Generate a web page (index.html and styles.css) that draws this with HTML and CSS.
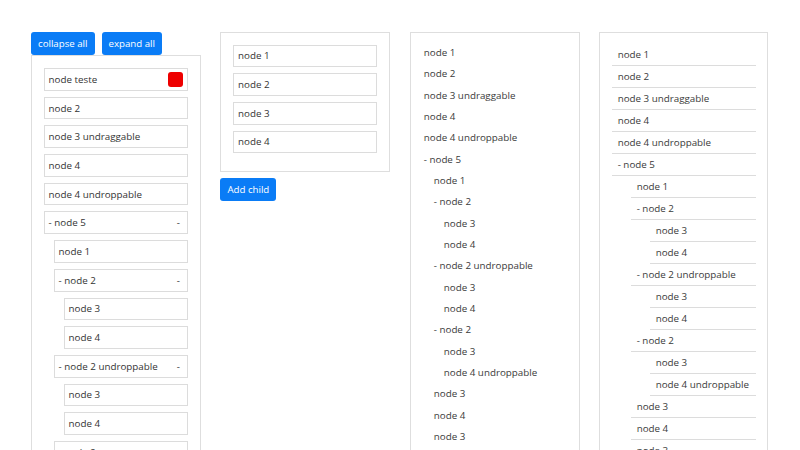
FILE: index.html
```html
<!DOCTYPE html>
<html>
<head>
<meta charset="utf-8">
<link rel="stylesheet" href="styles.css">
</head>
<body>
<div class="page">
  <div class="col">
    <div class="btns">
      <button class="btn">collapse all</button>
      <button class="btn">expand all</button>
    </div>
    <div class="box">
      <div class="item"><span>node teste</span><span class="red"></span></div>
      <div class="item"><span>node 2</span></div>
      <div class="item"><span>node 3 undraggable</span></div>
      <div class="item"><span>node 4</span></div>
      <div class="item"><span>node 4 undroppable</span></div>
      <div class="item"><span>- node 5</span><span class="tog">-</span></div>
      <div class="kids">
        <div class="item"><span>node 1</span></div>
        <div class="item"><span>- node 2</span><span class="tog">-</span></div>
        <div class="kids">
          <div class="item"><span>node 3</span></div>
          <div class="item"><span>node 4</span></div>
        </div>
        <div class="item"><span>- node 2 undroppable</span><span class="tog">-</span></div>
        <div class="kids">
          <div class="item"><span>node 3</span></div>
          <div class="item"><span>node 4</span></div>
        </div>
        <div class="item"><span>- node 2</span><span class="tog">-</span></div>
        <div class="kids">
          <div class="item"><span>node 3</span></div>
          <div class="item"><span>node 4 undroppable</span></div>
        </div>
      </div>
    </div>
  </div>

  <div class="col">
    <div class="box">
      <div class="item"><span>node 1</span></div>
      <div class="item"><span>node 2</span></div>
      <div class="item"><span>node 3</span></div>
      <div class="item"><span>node 4</span></div>
    </div>
    <button class="btn add">Add child</button>
  </div>

  <div class="col">
    <div class="box plain">
      <div class="prow">node 1</div>
      <div class="prow">node 2</div>
      <div class="prow">node 3 undraggable</div>
      <div class="prow">node 4</div>
      <div class="prow">node 4 undroppable</div>
      <div class="prow">- node 5</div>
      <div class="pkids">
        <div class="prow">node 1</div>
        <div class="prow">- node 2</div>
        <div class="pkids">
          <div class="prow">node 3</div>
          <div class="prow">node 4</div>
        </div>
        <div class="prow">- node 2 undroppable</div>
        <div class="pkids">
          <div class="prow">node 3</div>
          <div class="prow">node 4</div>
        </div>
        <div class="prow">- node 2</div>
        <div class="pkids">
          <div class="prow">node 3</div>
          <div class="prow">node 4 undroppable</div>
        </div>
        <div class="prow">node 3</div>
        <div class="prow">node 4</div>
        <div class="prow">node 3</div>
        <div class="prow">node 4</div>
      </div>
    </div>
  </div>

  <div class="col">
    <div class="box lined">
      <div class="lrow">node 1</div>
      <div class="lrow">node 2</div>
      <div class="lrow">node 3 undraggable</div>
      <div class="lrow">node 4</div>
      <div class="lrow">node 4 undroppable</div>
      <div class="lrow">- node 5</div>
      <div class="lkids">
        <div class="lrow">node 1</div>
        <div class="lrow">- node 2</div>
        <div class="lkids">
          <div class="lrow">node 3</div>
          <div class="lrow">node 4</div>
        </div>
        <div class="lrow">- node 2 undroppable</div>
        <div class="lkids">
          <div class="lrow">node 3</div>
          <div class="lrow">node 4</div>
        </div>
        <div class="lrow">- node 2</div>
        <div class="lkids">
          <div class="lrow">node 3</div>
          <div class="lrow">node 4 undroppable</div>
        </div>
        <div class="lrow">node 3</div>
        <div class="lrow">node 4</div>
        <div class="lrow">node 3</div>
        <div class="lrow">node 4</div>
      </div>
    </div>
  </div>
</div>
</body>
</html>
```

FILE: styles.css
```css
* { box-sizing: border-box; }
html, body { margin: 0; padding: 0; background: #fff; }
body {
  font-family: "Open Sans", "Noto Sans", sans-serif;
  font-size: 9.8px;
  color: #333;
  overflow: hidden;
  height: 450px;
}
.page {
  display: grid;
  grid-template-columns: 170px 170px 170px 169px;
  column-gap: 19.4px;
  padding: 31.5px 0 0 31px;
  align-items: start;
}
.btns { display: flex; gap: 7px; }
.btn {
  font-family: inherit;
  font-size: 9.7px;
  color: #fff;
  background: #0a7cf6;
  border: none;
  border-radius: 3px;
  height: 23.5px;
  padding: 0 7px;
  line-height: 23.5px;
}
.box {
  border: 1px solid #dedede;
  padding: 12px;
}
.item {
  height: 22.7px;
  border: 1px solid #dcdcdc;
  margin-bottom: 6px;
  display: flex;
  align-items: center;
  justify-content: space-between;
  padding: 0 7px 0 3.6px;
  white-space: nowrap;
}
.item .red {
  width: 15px;
  height: 15px;
  background: #ee0000;
  border-radius: 3px;
  margin-right: -3px;
}
.kids { margin-left: 10px; }
.add { margin-top: 5.5px; padding: 0 7px; }

.plain { padding: 9.5px 12px 10px 13px; height: 480px; }
.prow {
  height: 21.33px;
  line-height: 21.33px;
  color: #3a3a3a;
  white-space: nowrap;
}
.pkids { padding-left: 10px; }

.lined { padding: 11px 11px 10px 12px; height: 480px; }
.lrow {
  height: 22px;
  line-height: 21px;
  padding-left: 5.5px;
  border-bottom: 1px solid #dcdcdc;
  color: #3a3a3a;
  white-space: nowrap;
}
.lkids { padding-left: 19px; }
```
